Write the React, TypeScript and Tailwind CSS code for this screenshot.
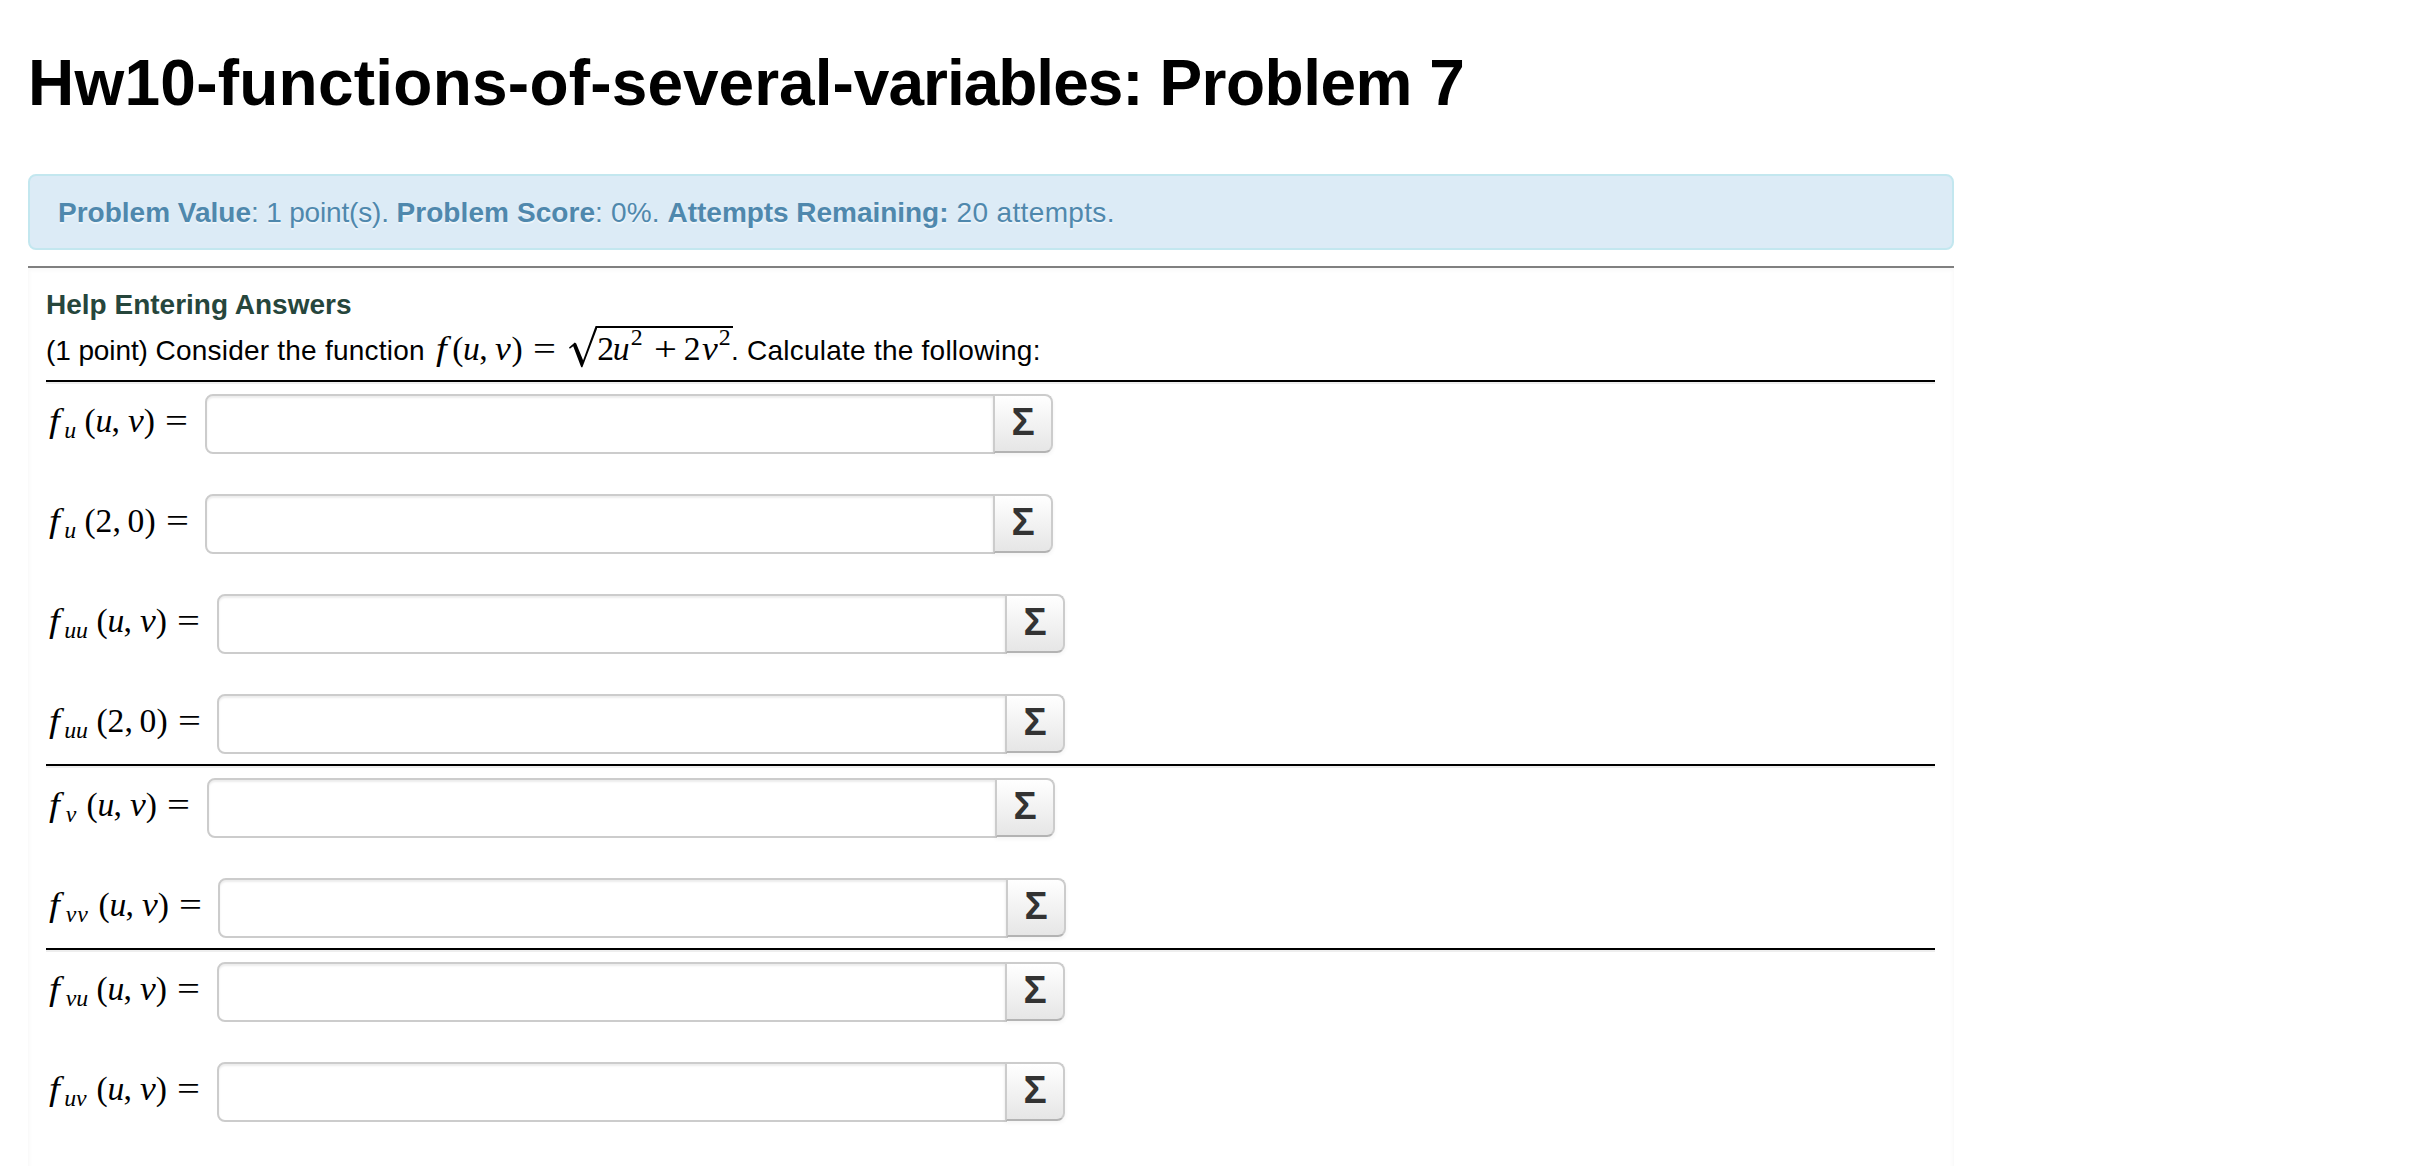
import type { ReactNode } from "react";

type Answer = {
  sub: string;
  args: [string, string];
  subClass: string;
  labelClass: string;
};

const SECTIONS: Answer[][] = [
  [
    { sub: "u", args: ["u", "v"], subClass: "w-[20.4px]", labelClass: "w-[159px]" },
    { sub: "u", args: ["2", "0"], subClass: "w-[20.4px]", labelClass: "w-[159px]" },
    { sub: "uu", args: ["u", "v"], subClass: "w-[32.4px]", labelClass: "w-[171px]" },
    { sub: "uu", args: ["2", "0"], subClass: "w-[32.4px]", labelClass: "w-[171px]" },
  ],
  [
    { sub: "v", args: ["u", "v"], subClass: "w-[22.4px] pl-[1.5px]", labelClass: "w-[161px]" },
    { sub: "vv", args: ["u", "v"], subClass: "w-[34.4px] pl-[1.5px] tracking-[1px]", labelClass: "w-[172px]" },
  ],
  [
    { sub: "vu", args: ["u", "v"], subClass: "w-[32.4px] pl-[1.5px]", labelClass: "w-[171px]" },
    { sub: "uv", args: ["u", "v"], subClass: "w-[32.4px]", labelClass: "w-[171px]" },
  ],
];

function Sym({ className, children }: { className: string; children: ReactNode }) {
  return <span className={`inline-block shrink-0 whitespace-nowrap ${className}`}>{children}</span>;
}

function MathText({ className, children }: { className: string; children: ReactNode }) {
  return (
    <span
      className={`flex items-baseline font-['Liberation_Serif',serif] text-[33.6px] text-black ${className}`}
    >
      {children}
    </span>
  );
}

// "(a, b) =" shared by the statement and every answer label
function Args({ args }: { args: [string, string] }) {
  const numeric = args[0] === "2";
  return (
    <>
      <Sym className="w-[10.8px]">(</Sym>
      <Sym className={numeric ? "w-[17px]" : "w-[16.2px] italic"}>{args[0]}</Sym>
      <Sym className={numeric ? "w-[15px]" : "w-[16.2px]"}>,</Sym>
      <Sym className={numeric ? "w-[17.2px]" : "w-[16px] origin-left scale-x-[1.06] italic"}>{args[1]}</Sym>
      <Sym className="w-[21.4px]">)</Sym>
      <Sym className="w-[18.9px] origin-left scale-x-[1.21]">=</Sym>
    </>
  );
}

function SquareRoot() {
  return (
    <>
      <svg className="ml-[17.4px] h-[42px] w-[28px] shrink-0 self-start" viewBox="0 0 28 42" fill="none">
        <path d="M0 21.6 L5.8 16.4 L7.2 17.4 L14.1 34.2 L26.6 0 L28.4 0 L28.4 1.6 L13.4 41.2 L12.2 41.2 L4.2 20.2 L0.8 22.8 Z" fill="#000" />
      </svg>
      <MathText className="w-[136px] border-t-2 border-black pt-px leading-[40px]">
        <Sym className="w-[15.5px]">2</Sym>
        <Sym className="w-[18px] italic">u</Sym>
        <Sym className="w-[23px] -translate-y-[15.3px] text-[23.8px]">2</Sym>
        <Sym className="w-[30px] origin-left scale-x-[1.21]">+</Sym>
        <Sym className="w-[17.9px]">2</Sym>
        <Sym className="w-[17.3px] origin-left scale-x-[1.06] italic">v</Sym>
        <Sym className="-translate-y-[15.3px] text-[23.8px]">2</Sym>
      </MathText>
    </>
  );
}

function Rule() {
  return <div className="h-1 w-[1889px] border-t-2 border-black bg-[#eeeeee]" />;
}

function AnswerRow({ answer }: { answer: Answer }) {
  return (
    <div className="flex h-[60px] items-start">
      <MathText className={`shrink-0 pl-[3px] leading-[53px] ${answer.labelClass}`}>
        <Sym className="w-[15.2px] origin-left scale-x-[1.15] italic">f</Sym>
        <Sym className={`translate-y-[6px] text-[23.8px] italic ${answer.subClass}`}>{answer.sub}</Sym>
        <Args args={answer.args} />
      </MathText>
      <input
        type="text"
        aria-label={`f${answer.sub}(${answer.args.join(",")})`}
        className="h-[60px] w-[790px] rounded-l-lg border-2 border-[#cccccc] bg-white px-3 text-[28px] shadow-[inset_0_2px_2px_rgba(0,0,0,0.075)] outline-none"
      />
      <button
        type="button"
        className="-ml-0.5 flex h-[59px] w-[60px] items-center justify-center rounded-r-lg border-2 border-[#cccccc] border-b-[#b3b3b3] bg-gradient-to-b from-white to-[#e6e6e6] pb-[3px] font-['Liberation_Sans',sans-serif] text-[38.7px] leading-none font-bold text-[#333333] shadow-[inset_0_2px_0_rgba(255,255,255,0.2),0_2px_4px_rgba(0,0,0,0.05)]"
      >
        Σ
      </button>
    </div>
  );
}

export default function App() {
  return (
    <div className="h-screen overflow-hidden bg-white pt-[43px] pl-7 font-['Liberation_Sans',Arial,sans-serif] text-[28px] text-black">
      <h1 className="h-20 text-[64px] leading-[80px] font-bold whitespace-nowrap">
        <span className="tracking-[0.24px]">Hw10-functions-of-</span>
        <span>several-</span>
        <span className="tracking-[-1px]">variables: </span>
        <span className="tracking-[-0.5px]">Problem 7</span>
      </h1>

      <div className="mt-[51px] flex h-[76px] w-[1926px] items-center rounded-lg border-2 border-[#c3e7ef] bg-[#dcebf6] pt-px pl-7 leading-[41px] whitespace-pre text-[#4f88ad] [text-shadow:0_2px_0_rgba(255,255,255,0.5)]">
        <b>Problem Value</b>
        <span className="tracking-[-0.17px]">: 1 point(s). </span>
        <b className="tracking-[0.08px]">Problem Score</b>
        <span className="tracking-[0.15px]">: 0%. </span>
        <b className="tracking-[-0.04px]">Attempts Remaining:</b>
        <span className="tracking-[0.35px]"> 20 attempts.</span>
      </div>

      <div className="mt-4 h-0.5 w-[1926px] bg-[#808080]" />

      <div className="h-[920px] w-[1926px] border-x border-[#fafafa] px-[17px] pt-[17px] shadow-[inset_0_2px_4px_rgba(0,0,0,0.03)]">
        <a className="block h-10 leading-[40px] font-bold text-[#26463c]">Help Entering Answers</a>

        <div className="mt-px flex h-[54px] items-baseline leading-[40px] whitespace-pre">
          <span className="w-[390px] shrink-0 tracking-[0.22px]">
            <span className="tracking-[-0.1px]">(1 point) </span>
            Consider the function
          </span>
          <MathText className="shrink-0 leading-[40px]">
            <Sym className="w-[16.3px] origin-left scale-x-[1.15] italic">f</Sym>
            <Args args={["u", "v"]} />
          </MathText>
          <SquareRoot />
          <span className="-ml-[2.2px] tracking-[0.24px]">. Calculate the following:</span>
        </div>

        {SECTIONS.map((answers, i) => (
          <section key={i} className="mb-2.5">
            <Rule />
            <div className="flex flex-col gap-10 pt-2.5">
              {answers.map((answer) => (
                <AnswerRow key={answer.sub + answer.args.join("")} answer={answer} />
              ))}
            </div>
          </section>
        ))}
      </div>
    </div>
  );
}
